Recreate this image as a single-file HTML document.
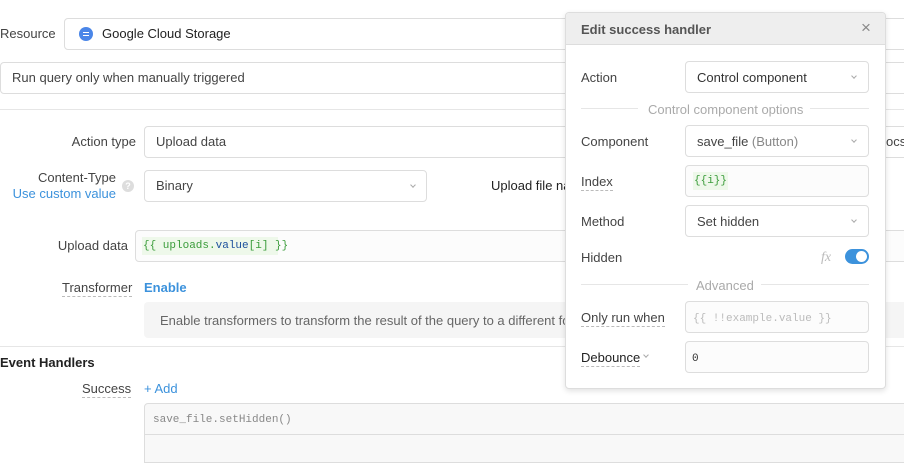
<!DOCTYPE html>
<html><head><meta charset="utf-8"><style>
*{box-sizing:border-box;margin:0;padding:0}
body{width:904px;height:445px;overflow:hidden;background:#fff;font-family:"Liberation Sans",sans-serif;font-size:13px;color:#333;position:relative}
.a{position:absolute}
.box{position:absolute;border:1px solid #ddd;border-radius:4px;background:#fff}
.lbl{position:absolute;color:#444;font-size:13px;line-height:16px;white-space:nowrap;margin-top:1px}
.r{text-align:right}
.mono{font-family:"Liberation Mono",monospace;font-size:11px;white-space:nowrap}
.ul{border-bottom:1px dashed #bbb}
.chev{position:absolute;width:6px;height:6px;border-right:1px solid #aaa;border-bottom:1px solid #aaa;transform:rotate(45deg)}
.blue{color:#3c92dc}
.hr{position:absolute;height:1px;background:#e6e6e6}
</style></head><body>
<div class="lbl" style="left:0;top:25px">Resource</div>
<div class="box" style="left:64px;top:18px;width:900px;height:32px"></div>
<div class="a" style="left:79px;top:27px;width:14px;height:14px;border-radius:50%;background:#4a86e8"></div>
<div class="a" style="left:83px;top:32px;width:6px;height:1px;background:#fff"></div>
<div class="a" style="left:83px;top:35px;width:6px;height:1px;background:#fff"></div>
<div class="lbl" style="left:102px;top:25px;color:#222">Google Cloud Storage</div>
<div class="box" style="left:0;top:62px;width:960px;height:32px"></div>
<div class="lbl" style="left:12px;top:69px">Run query only when manually triggered</div>
<div class="hr" style="left:0;top:109px;width:904px"></div>

<div class="lbl r" style="left:0;width:136px;top:133px">Action type</div>
<div class="box" style="left:144px;top:126px;width:800px;height:32px"></div>
<div class="lbl" style="left:156px;top:133px">Upload data</div>
<div class="lbl" style="left:886px;top:133px">ocs</div>

<div class="lbl r" style="left:0;width:116px;top:169px">Content-Type</div>
<div class="lbl r blue" style="left:0;width:116px;top:185px">Use custom value</div>
<div class="a" style="left:122px;top:180px;width:12px;height:12px;border-radius:50%;background:#ddd;color:#fff;font-size:9px;text-align:center;line-height:12px;font-weight:bold">?</div>
<div class="box" style="left:144px;top:170px;width:283px;height:32px"></div>
<div class="lbl" style="left:156px;top:177px">Binary</div>
<div class="chev" style="left:411px;top:183px;width:4px;height:4px"></div>
<div class="lbl" style="left:491px;top:177px;color:#222">Upload file na</div>

<div class="lbl r" style="left:0;width:128px;top:237px">Upload data</div>
<div class="box" style="left:135px;top:230px;width:820px;height:32px;background:#fcfcfc"></div>
<div class="a mono" style="left:142px;top:237px;height:18px;width:136px;background:#eef8ea;line-height:18px;padding-left:1px;color:#3a9c3a">{{ uploads.<span style="color:#1a4f9c">value</span>[i] }}</div>

<div class="lbl ul" style="left:62px;top:279px">Transformer</div>
<div class="lbl blue" style="left:144px;top:279px;font-weight:bold">Enable</div>
<div class="a" style="left:144px;top:302px;width:800px;height:36px;background:#f5f5f5;border-radius:4px"></div>
<div class="lbl" style="left:160px;top:312px;color:#666">Enable transformers to transform the result of the query to a different fo</div>
<div class="hr" style="left:0;top:346px;width:904px"></div>
<div class="lbl" style="left:0;top:354px;color:#222;font-weight:600">Event Handlers</div>
<div class="lbl ul" style="left:82px;top:380px">Success</div>
<div class="lbl blue" style="left:144px;top:380px">+ Add</div>
<div class="box" style="left:144px;top:403px;width:800px;height:60px;background:#f8f8f8;border-radius:4px 4px 0 0"></div>
<div class="hr" style="left:145px;top:434px;width:760px;background:#ddd"></div>
<div class="lbl mono" style="left:153px;top:411px;color:#888">save_file.setHidden()</div>

<!-- modal -->
<div class="a" style="left:565px;top:12px;width:321px;height:377px;background:#fff;border:1px solid #ddd;border-radius:4px;box-shadow:0 2px 6px rgba(0,0,0,.12);overflow:hidden">
 <div class="a" style="left:0;top:0;width:321px;height:32px;background:#eeeeee;border-bottom:1px solid #ddd"></div>
 <div class="lbl" style="left:15px;top:8px;color:#555;font-weight:600">Edit success handler</div>
 <div class="lbl" style="left:295px;top:6px;color:#888;font-size:17px">×</div>
</div>
<div class="lbl" style="left:581px;top:69px">Action</div>
<div class="box" style="left:685px;top:61px;width:184px;height:32px"></div>
<div class="lbl" style="left:697px;top:69px;color:#333">Control component</div>
<div class="chev" style="left:852px;top:74px;width:4px;height:4px"></div>
<div class="hr" style="left:581px;top:108px;width:57px"></div>
<div class="hr" style="left:810px;top:108px;width:59px"></div>
<div class="lbl" style="left:648px;top:101px;color:#aaa">Control component options</div>
<div class="lbl" style="left:581px;top:133px">Component</div>
<div class="box" style="left:685px;top:125px;width:184px;height:32px"></div>
<div class="lbl" style="left:697px;top:133px">save_file <span style="color:#888">(Button)</span></div>
<div class="chev" style="left:852px;top:138px;width:4px;height:4px"></div>
<div class="lbl ul" style="left:581px;top:173px">Index</div>
<div class="box" style="left:685px;top:165px;width:184px;height:32px;background:#fcfcfc"></div>
<div class="a mono" style="left:693px;top:172px;height:18px;line-height:18px;background:#eef8ea;color:#3a9c3a;padding:0 1px">{{i}}</div>
<div class="lbl" style="left:581px;top:213px">Method</div>
<div class="box" style="left:685px;top:205px;width:184px;height:32px"></div>
<div class="lbl" style="left:697px;top:213px">Set hidden</div>
<div class="chev" style="left:852px;top:218px;width:4px;height:4px"></div>
<div class="lbl" style="left:581px;top:249px">Hidden</div>
<div class="lbl" style="left:821px;top:249px;color:#bbb;font-style:italic;font-family:'Liberation Serif',serif;font-size:14px">fx</div>
<div class="a" style="left:845px;top:249px;width:24px;height:15px;border-radius:8px;background:#3c92dc"></div>
<div class="a" style="left:856px;top:251px;width:11px;height:11px;border-radius:50%;background:#fff"></div>
<div class="hr" style="left:581px;top:284px;width:107px"></div>
<div class="hr" style="left:761px;top:284px;width:108px"></div>
<div class="lbl" style="left:696px;top:277px;color:#aaa">Advanced</div>
<div class="lbl ul" style="left:581px;top:309px">Only run when</div>
<div class="box" style="left:685px;top:301px;width:184px;height:32px;background:#fcfcfc"></div>
<div class="lbl mono" style="left:693px;top:310px;color:#bbb">{{ !!example.value }}</div>
<div class="lbl ul" style="left:581px;top:349px;color:#222">Debounce</div>
<div class="chev" style="left:644px;top:353px;width:4px;height:4px"></div>
<div class="box" style="left:685px;top:341px;width:184px;height:32px;background:#fcfcfc"></div>
<div class="lbl mono" style="left:692px;top:350px;color:#333">0</div>
</body></html>
